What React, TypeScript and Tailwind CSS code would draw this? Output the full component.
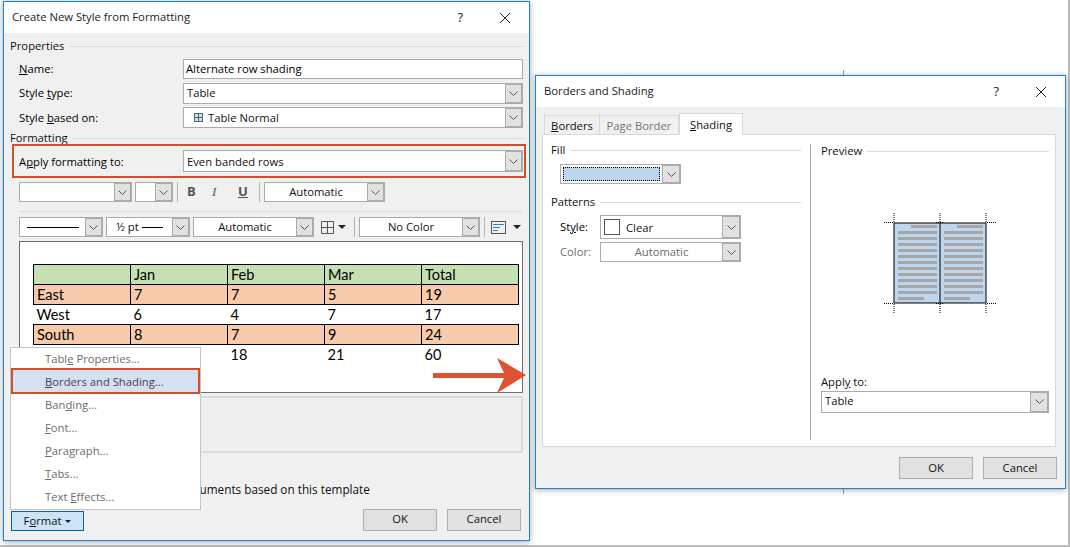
import type { ReactNode } from "react";

const font = "font-['Open_Sans','Noto_Sans',sans-serif] text-[11.25px]";

function Chevron() {
  return (
    <svg width="9" height="5" viewBox="0 0 9 5" fill="none" stroke="#555" strokeWidth="1">
      <path d="M0.5 0.5 L4.5 4.5 L8.5 0.5" />
    </svg>
  );
}

function Select({ className, children, center = false, muted = false, arrow = "w-[17px]" }: { className: string; children?: ReactNode; center?: boolean; muted?: boolean; arrow?: string }) {
  return (
    <div className={`flex shrink-0 border border-[#ababab] bg-white ${muted ? "text-[#6d6d6d]" : "text-[#111]"} ${className}`}>
      <div className={`flex min-w-0 flex-1 items-center overflow-hidden whitespace-nowrap ${center ? "justify-center" : "pl-[3px]"}`}>{children}</div>
      <div className={`flex shrink-0 items-center justify-center border border-[#ababab] bg-[#e1e1e1] ${arrow}`}>
        <Chevron />
      </div>
    </div>
  );
}

function Legend({ label, className = "" }: { label: string; className?: string }) {
  return (
    <div className={`flex h-[16px] items-center gap-[5px] text-[#111] ${className}`}>
      <span className="whitespace-nowrap">{label}</span>
      <div className="h-px flex-1 bg-[#d9d9d9]" />
    </div>
  );
}

function Caret({ className = "" }: { className?: string }) {
  return <div className={`h-0 w-0 border-x-[4px] border-t-[4px] border-x-transparent border-t-[#222] ${className}`} />;
}

function VBar({ className }: { className: string }) {
  return <div className={`h-[20px] w-px shrink-0 bg-[#b5b5b5] ${className}`} />;
}

function Btn({ label, className = "" }: { label: string; className?: string }) {
  return <div className={`flex h-[22px] w-[74px] items-center justify-center border border-[#adadad] bg-[#e1e1e1] text-[#111] ${className}`}>{label}</div>;
}

function TitleBar({ title }: { title: string }) {
  return (
    <div className="flex h-[31px] shrink-0 items-center bg-white pl-[8px] text-[#222]">
      <span className="flex-1 text-[11.25px]">{title}</span>
      <span className="mr-[36px] text-[13px]">?</span>
      <svg width="12" height="12" viewBox="0 0 12 12" stroke="#222" strokeWidth="1" className="mr-[18px]">
        <path d="M1 1 L11 11 M11 1 L1 11" />
      </svg>
    </div>
  );
}

const tableRows = [
  { cells: ["", "Jan", "Feb", "Mar", "Total"], bg: "bg-[#c5e0b3]", line: true },
  { cells: ["East", "7", "7", "5", "19"], bg: "bg-[#f7caac]", line: true },
  { cells: ["West", "6", "4", "7", "17"], bg: "", line: false },
  { cells: ["South", "8", "7", "9", "24"], bg: "bg-[#f7caac]", line: true },
  { cells: ["", "", "18", "21", "60"], bg: "", line: false },
];

const menuItems: { pre: string; key: string; post: string; active?: boolean }[] = [
  { pre: "Tabl", key: "e", post: " Properties..." },
  { pre: "", key: "B", post: "orders and Shading...", active: true },
  { pre: "Ban", key: "d", post: "ing..." },
  { pre: "", key: "F", post: "ont..." },
  { pre: "", key: "P", post: "aragraph..." },
  { pre: "", key: "T", post: "abs..." },
  { pre: "Text ", key: "E", post: "ffects..." },
];

function BookPreview() {
  const ys = [13, 19, 25, 31, 37, 43, 49, 55, 61, 67, 73];
  const columns = [10, 56];
  return (
    <svg width="112" height="104" viewBox="0 0 112 104" className="block">
      <rect x="10" y="10" width="92" height="80" fill="#bdd6ee" stroke="#000" strokeWidth="1" />
      <path d="M56 10 V90" stroke="#000" strokeWidth="1" />
      {columns.map((x) => (
        <g key={x} fill="#a6a6a6">
          <rect x={x + 17} y="12" width="26" height="3" />
          {ys.map((y) => (
            <rect key={y} x={x + 4} y={y + 5} width="39" height="3" />
          ))}
          <rect x={x + 4} y="84" width="26" height="3" />
        </g>
      ))}
      <path d="M10 0 V9 M56 0 V9 M102 0 V9 M10 91 V100 M56 91 V100 M102 91 V100 M0 9.5 H9 M103 9.5 H112 M0 90.5 H9 M103 90.5 H112 M52 9.5 H60 M52 90.5 H60" stroke="#000" strokeWidth="1" strokeDasharray="1 1" />
    </svg>
  );
}

function LeftDialog() {
  return (
    <div className="absolute left-[3px] top-px flex h-[540px] w-[527px] flex-col border border-[#1883d7] bg-[#f0f0f0] shadow-[0_1px_6px_rgba(0,0,0,0.35)]">
      <TitleBar title="Create New Style from Formatting" />
      <div className="relative flex flex-1 flex-col">
        <Legend label="Properties" className="mx-[6px] mt-[5px]" />
        <div className="ml-[15px] mr-[6px] mt-[5px] flex h-[20px] items-center">
          <span className="w-[164px]"><u>N</u>ame:</span>
          <div className="flex h-full flex-1 items-center border border-[#ababab] bg-white pl-[2px]">Alternate row shading</div>
        </div>
        <div className="ml-[15px] mr-[6px] mt-[4px] flex h-[21px] items-center">
          <span className="w-[164px]">Style <u>t</u>ype:</span>
          <Select className="h-full flex-1">Table</Select>
        </div>
        <div className="ml-[15px] mr-[6px] mt-[3px] flex h-[21px] items-center">
          <span className="mt-px w-[164px]">Style <u>b</u>ased on:</span>
          <Select className="h-full flex-1">
            <svg width="11" height="11" viewBox="0 0 11 11" className="ml-[6px] mr-[4px]" fill="none" stroke="#4a6a78">
              <rect x="1.5" y="1.5" width="8" height="8" fill="#cfe3e6" />
              <path d="M5.5 1 V10 M1 5.5 H10" />
            </svg>
            <span className="mt-[2px]">Table Normal</span>
          </Select>
        </div>
        <Legend label="Formatting" className="mx-[6px] mt-[2px]" />
        <div className="ml-[8px] mr-[3px] mt-[-2px] flex h-[34px] items-center border-2 border-[#d14f2a] pl-[5px] pr-[1px]">
          <span className="mt-[2px] w-[164px]">A<u>p</u>ply formatting to:</span>
          <Select className="h-[22px] flex-1"><span className="mt-[2px]">Even banded rows</span></Select>
        </div>
        <div className="ml-[15px] mt-[4px] flex h-[20px] items-center text-[#222]">
          <Select className="h-full w-[113px]" />
          <Select className="ml-[3px] h-full w-[38px]" />
          <VBar className="ml-[4px]" />
          <span className="ml-[9px] w-[11px] text-[13px] font-bold text-[#555]">B</span>
          <span className="ml-[14px] w-[11px] font-['Liberation_Serif',serif] text-[13px] italic text-[#555]">I</span>
          <span className="ml-[15px] w-[11px] text-[13px] font-bold text-[#555] underline">U</span>
          <VBar className="ml-[10px]" />
          <Select className="ml-[4px] h-full w-[121px]" center>Automatic</Select>
        </div>
        <div className="ml-[15px] mr-[7px] mt-[9px] h-px bg-[#d9d9d9]" />
        <div className="ml-[15px] mt-[5px] flex h-[20px] items-center">
          <Select className="h-full w-[84px]" center>
            <div className="h-px w-[52px] bg-black" />
          </Select>
          <Select className="ml-[3px] h-full w-[84px]" center>
            ½ pt<div className="ml-[3px] h-px w-[21px] bg-black" />
          </Select>
          <Select className="ml-[3px] h-full w-[121px]" center>Automatic</Select>
          <svg width="13" height="13" viewBox="0 0 13 13" fill="none" stroke="#555" className="ml-[7px]">
            <path d="M0.5 0.5 H12.5 V12.5 H0.5 Z M6.5 0.5 V12.5 M0.5 6.5 H12.5" />
          </svg>
          <Caret className="ml-[4px]" />
          <VBar className="ml-[8px]" />
          <Select className="ml-[4px] h-full w-[121px]" center>No Color</Select>
          <VBar className="ml-[4px]" />
          <svg width="15" height="13" viewBox="0 0 15 13" fill="none" className="ml-[6px]">
            <rect x="0.5" y="0.5" width="14" height="12" stroke="#555" />
            <path d="M2 3.5 H13 M2 6.5 H9 M2 9.5 H7" stroke="#2f7fc1" />
          </svg>
          <Caret className="ml-[7px]" />
        </div>
        <div className="ml-[15px] mr-[6px] mt-[4px] h-[152px] border border-[#6d6d6d] bg-white pl-[13px] pt-[22px]">
          <table className="w-[486px] table-fixed border-collapse font-['Lato',sans-serif] text-[14.5px] text-black">
            <tbody>
              {tableRows.map((row, r) => (
                <tr key={r} className={`h-[20px] ${row.bg}`}>
                  {row.cells.map((cell, i) => (
                    <td key={i} className={`overflow-hidden p-0 pl-[3px] leading-[18px] ${row.line ? "border border-black" : ""}`}>{cell}</td>
                  ))}
                </tr>
              ))}
            </tbody>
          </table>
        </div>
        <div className="ml-[15px] mr-[6px] mt-[3px] h-[57px] border-2 border-[#dcdcdc] bg-[#efefef]" />
        <div className="ml-[148px] mt-[28px] whitespace-nowrap text-[11.75px] text-[#111]">New documents based on this template</div>
        <div className="mr-[8px] mt-[10px] flex items-center justify-end gap-[10px]">
          <Btn label="OK" />
          <Btn label="Cancel" />
        </div>

        <div className="absolute left-[6px] top-[314px] flex h-[163px] w-[191px] flex-col border border-[#c4c4c4] bg-white text-[#6d6d6d]">
          {menuItems.map((item) =>
            item.active ? (
              <div key={item.post} className="mt-[-3px] flex h-[26px] items-center border-2 border-[#d14f2a] bg-[#d5e1f2] pl-[32px] pt-[2px] text-[#444]">
                <span>{item.pre}<u>{item.key}</u>{item.post}</span>
              </div>
            ) : (
              <div key={item.post} className="flex h-[23px] items-center pl-[34px]">
                <span>{item.pre}<u>{item.key}</u>{item.post}</span>
              </div>
            )
          )}
        </div>
        <div className="absolute left-[7px] top-[478px] flex h-[20px] w-[73px] items-center justify-center gap-[4px] border border-[#0a5fa8] bg-[#cce4f7] text-[#111]">
          <span>F<u>o</u>rmat</span>
          <div className="h-0 w-0 border-x-[3px] border-t-[3px] border-x-transparent border-t-[#222]" />
        </div>
      </div>
    </div>
  );
}

function RightDialog() {
  return (
    <div className="absolute left-[535px] top-[75px] flex h-[414px] w-[531px] flex-col border border-[#1883d7] bg-[#f0f0f0] shadow-[0_1px_6px_rgba(0,0,0,0.35)]">
      <TitleBar title="Borders and Shading" />
      <div className="ml-[8px] mt-[6px] flex h-[21px] items-end">
        <div className="flex h-[19px] w-[56px] items-center justify-center border border-b-0 border-[#d9d9d9] pt-[2px] text-[#111]"><span><u>B</u>orders</span></div>
        <div className="flex h-[19px] w-[79px] items-center justify-center border-t border-r border-[#d9d9d9] pt-[2px] text-[#777]">Page Border</div>
        <div className="z-10 -mb-px flex h-[22px] w-[64px] items-center justify-center border border-b-0 border-[#d9d9d9] bg-white pt-[2px] text-[#111]"><span><u>S</u>hading</span></div>
      </div>
      <div className="ml-[6px] mr-[9px] flex h-[313px] border border-[#d9d9d9] bg-white">
        <div className="w-[267px] pl-[8px] pr-[9px] pt-[7px]">
          <Legend label="Fill" />
          <Select className="ml-[9px] mt-[6px] h-[20px] w-[121px]" arrow="w-[18px]">
            <div className="ml-[-1px] h-[14px] w-[97px] border border-dotted border-black bg-[#bdd6ee]" />
          </Select>
          <Legend label="Patterns" className="mt-[10px]" />
          <div className="ml-[9px] mt-[5px] flex h-[24px] items-center">
            <span className="w-[40px]">St<u>y</u>le:</span>
            <Select className="h-full w-[141px]" arrow="w-[18px]">
              <div className="mr-[6px] h-[16px] w-[16px] border border-[#555]" />
              <span className="mt-[3px]">Clear</span>
            </Select>
          </div>
          <div className="ml-[9px] mt-[3px] flex h-[20px] items-center text-[#6d6d6d]">
            <span className="w-[40px]">Color:</span>
            <Select className="h-full w-[141px]" center muted arrow="w-[18px]">Automatic</Select>
          </div>
        </div>
        <div className="mb-[6px] mt-[9px] w-px bg-[#a6a6a6]" />
        <div className="flex flex-1 flex-col pl-[10px] pr-[6px] pt-[8px]">
          <Legend label="Preview" />
          <div className="ml-[63px] mt-[54px]">
            <BookPreview />
          </div>
          <div className="mt-[57px] text-[#111]">Appl<u>y</u> to:</div>
          <Select className="h-[22px] w-full" arrow="w-[18px]">Table</Select>
        </div>
      </div>
      <div className="mr-[8px] mt-[10px] flex justify-end gap-[10px]">
        <Btn label="OK" />
        <Btn label="Cancel" />
      </div>
    </div>
  );
}

export default function App() {
  return (
    <div className={`relative h-[547px] w-[1070px] overflow-hidden bg-white ${font}`}>
      <div className="absolute left-[843px] top-[70px] h-[424px] w-px bg-[#999]" />
      <div className="absolute bottom-0 left-0 h-[2px] w-[1068px] bg-[#bdbdbd]" />
      <div className="absolute right-0 top-0 h-[547px] w-[2px] bg-[#bdbdbd]" />
      <LeftDialog />
      <RightDialog />
      <svg width="96" height="38" viewBox="0 0 96 38" className="absolute left-[432px] top-[357px]" fill="#dd5230">
        <path d="M1 16 H72 L65 1 L94 18 L65 36 L72 21 H1 Z" />
      </svg>
    </div>
  );
}
